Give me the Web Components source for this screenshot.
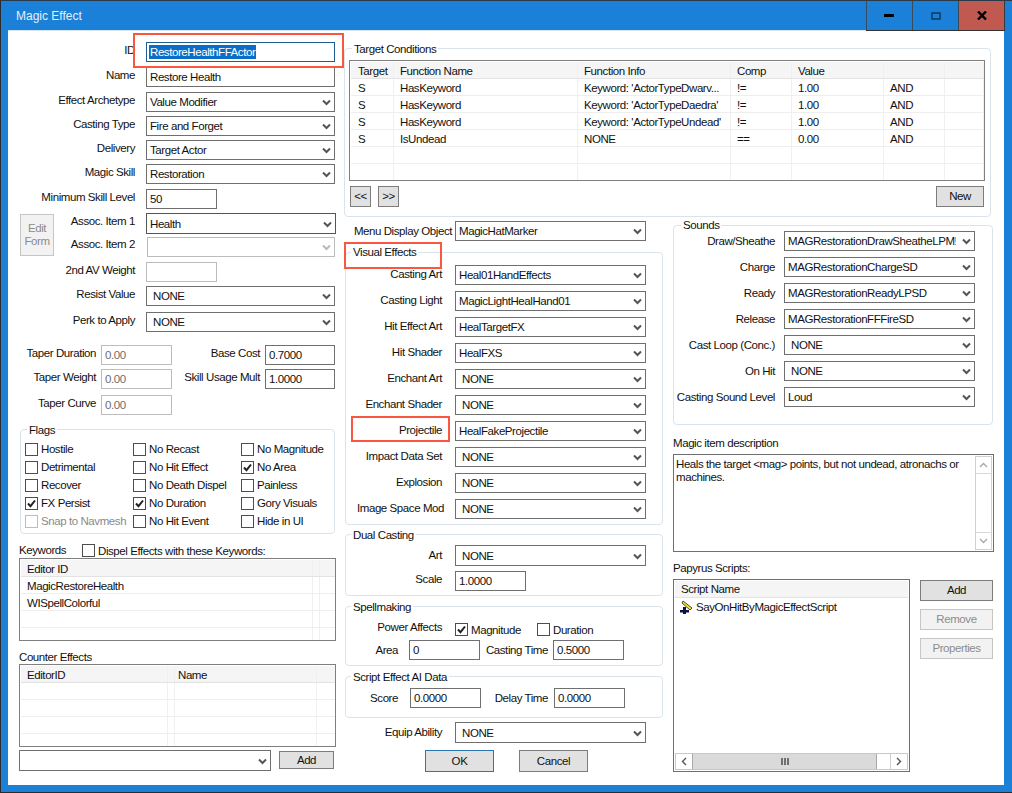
<!DOCTYPE html>
<html><head><meta charset="utf-8">
<style>
html,body{margin:0;padding:0;background:#fff}
body{width:1012px;height:793px;overflow:hidden;font:11.5px/14px "Liberation Sans",Arial,sans-serif;letter-spacing:-.42px;color:#111}
</style></head><body>
<script>
const def=(name,css,html,extra={})=>{
  customElements.define(name,class extends HTMLElement{
    connectedCallback(){
      if(this.shadowRoot)return;
      const s=this.attachShadow({mode:'open'});
      const h=typeof html==='function'?html(this):html;
      s.innerHTML=`<style>${css}</style>${h}`;
    }
  });
};
const chev=`<svg width="9" height="7" viewBox="0 0 9 7"><path d="M1 1.5 L4.5 5 L8 1.5" fill="none" stroke="currentColor" stroke-width="2"/></svg>`;
def('x-window',`
 :host{display:block;position:relative;width:1012px;height:793px;box-sizing:border-box;background:#1a80d8;border-top:1px solid #2b3a4a;border-left:1px solid #2b2b2b;border-bottom:1px solid #2b2b2b}
 .bar{display:flex;height:29px;position:relative;z-index:1}
 .t{color:#e4f1fc;font-size:12px;letter-spacing:0;margin:8px 0 0 15px;flex:1}
 .btns{display:flex;height:29px;margin-right:7px;border-bottom:1px solid #333;}
 .b{width:45px;border-left:1px solid #3a4a5a;display:flex;align-items:center;justify-content:center;box-sizing:content-box}
 .b.c{background:#c0594f;border-right:1px solid #3a3a3a;width:45px}
 .client{position:absolute;left:7px;top:29px;width:996px;height:755px;background:#fff;border-top:1px solid #d6e4f0;box-sizing:border-box;overflow:visible;display:flex}
`,`<div class="bar"><div class="t">Magic Effect</div><div class="btns">
 <div class="b"><svg width="10" height="3" style="margin-left:-2px"><rect width="10" height="3" fill="#000"/></svg></div>
 <div class="b"><svg width="10" height="8"><rect x="1" y="1" width="8" height="6" fill="none" stroke="#0e4a80" stroke-width="2"/></svg></div>
 <div class="b c"><svg width="10" height="9"><path d="M1 .5 L9 8.5 M9 .5 L1 8.5" stroke="#000" stroke-width="2.4"/></svg></div>
</div></div><div class="client"><slot></slot></div>`);

def('x-col',`:host{display:flex;flex-direction:column;box-sizing:border-box}`,`<slot></slot>`);
def('x-hbox',`:host{display:flex;box-sizing:border-box;align-items:flex-start}`,`<slot></slot>`);

def('x-group',`
 :host{display:block;box-sizing:border-box;position:relative;border:1px solid #dbe3ea;border-radius:4px}
 .l{position:absolute;left:var(--ll,7px);top:var(--lt,-7px);background:#fff;padding:0 2px;line-height:14px;white-space:nowrap}
`,t=>`<div class="l">${t.getAttribute('label')}</div><slot></slot>`);

def('x-field',`
 :host{display:grid;grid-template-columns:var(--lw,127px) auto;column-gap:var(--gap,11px);align-items:center;height:20px}
 .l{text-align:right;white-space:nowrap;padding-bottom:var(--ls,5px);margin-right:var(--lr,0)}
`,t=>`<div class="l">${t.getAttribute('label')}</div><slot></slot>`);

def('x-label',`:host{display:block;white-space:nowrap;line-height:14px}`,`<slot></slot>`);

const boxCss=`
 :host{display:flex;align-items:center;box-sizing:border-box;width:var(--w,189px);height:var(--h,20px);background:#fff;border:1px solid #6f6f6f;white-space:nowrap;overflow:hidden}
 :host([disabled]){border-color:#bcbcbc;color:#6d6d6d}
`;
def('x-input',boxCss+`
 :host{width:var(--w,71px);padding-left:3px}
 :host([selected]){border-color:#1d5d90;padding-left:2px}
 .s{background:#0a6ec9;color:#fff;padding:0 1px}
`,t=>{const v=t.getAttribute('value')||'';return t.hasAttribute('selected')?`<span class="s">${v}</span>`:`<span>${v}</span>`});
def('x-combo',boxCss+`
 :host{width:var(--w,191px);padding-left:3px;padding-right:3px;position:relative}
 :host([none]){padding-left:6px}
 .v{flex:1;overflow:hidden;margin-right:15px}
 .c{color:#555;display:flex;width:9px;height:7px;position:absolute;right:3px;top:50%;margin-top:-3px}
 :host([disabled]) .c{color:#b9b9b9}
`,t=>`<div class="v">${t.getAttribute('value')||''}</div><div class="c">${chev}</div>`);

def('x-check',`
 :host{display:flex;align-items:center;white-space:nowrap;height:18px}
 .b{width:13px;height:13px;box-sizing:border-box;border:1px solid #4d4d4d;margin-right:3px;background:#fff;display:flex;flex:none}
 :host([disabled]) .b{border-color:#bdbdbd}
 :host([disabled]){color:#8a8a8a}
`,t=>`<div class="b">${t.hasAttribute('checked')?`<svg width="11" height="11" viewBox="0 0 11 11"><path d="M2 5.5 L4.5 8.2 L9 2.5" fill="none" stroke="#222" stroke-width="2"/></svg>`:''}</div><slot></slot>`);

def('x-button',`
 :host{display:flex;align-items:center;justify-content:center;box-sizing:border-box;background:#e1e1e1;border:1px solid #7c7c7c;text-align:center;line-height:13px;white-space:nowrap;width:var(--w,69px);height:var(--h,21px)}
 :host([default]){border-color:#2b77b3}
 :host([disabled]){background:#f2f2f2;border-color:#c6c6c6;color:#8c8c8c}
`,`<slot></slot>`);

def('x-table',`
 :host{display:block;box-sizing:border-box;border:1px solid #7f7f7f;background:#fff;overflow:hidden;padding:1px 0 0 1px;width:var(--tw);height:var(--th)}
`,`<slot></slot>`);
def('x-tr',`
 :host{display:grid;grid-template-columns:var(--cols);height:17px;box-sizing:border-box;border-bottom:1px solid #eeeeee}
 :host([head]){background:#f5f5f5;border-bottom-color:#e3e3e3}
`,`<slot></slot>`);
def('x-td',`
 :host{display:block;box-sizing:border-box;padding:1px 0 0 var(--cp,6px);border-right:1px solid #f0f0f0;line-height:16px;white-space:nowrap;overflow:hidden;min-width:0}
`,`<slot></slot>`);

def('x-vscroll',`
 :host{display:flex;flex-direction:column;justify-content:space-between;width:17px;box-sizing:border-box;border:1px solid #d0d0d0;height:94px;background:#fff;color:#a8a8a8}
 .a{height:16px;display:flex;align-items:center;justify-content:center}
 .a.t{border-bottom:1px solid #d8d8d8}.a.d{border-top:1px solid #d8d8d8}
 svg{display:block}
`,`<div class="a t"><svg width="9" height="6"><path d="M1 5 L4.5 1.5 L8 5" fill="none" stroke="currentColor" stroke-width="1.4"/></svg></div>
   <div class="a d"><svg width="9" height="6"><path d="M1 1 L4.5 4.5 L8 1" fill="none" stroke="currentColor" stroke-width="1.4"/></svg></div>`);
def('x-hscroll',`
 :host{display:flex;height:17px;box-sizing:border-box;border:1px solid #c8c8c8;background:#fff;color:#555}
 .a{width:16px;display:flex;align-items:center;justify-content:center;flex:none}
 .th{flex:none;width:185px;background:#dadada;border-left:1px solid #a9a9a9;border-right:1px solid #a9a9a9;box-sizing:border-box;display:flex;align-items:center;justify-content:center}
 .sp{flex:1;border-right:1px solid #d0d0d0}
`,`<div class="a"><svg width="6" height="9"><path d="M5 1 L1.5 4.5 L5 8" fill="none" stroke="currentColor" stroke-width="1.4"/></svg></div>
 <div class="th"><svg width="8" height="7"><path d="M1 0V7M4 0V7M7 0V7" stroke="#444" stroke-width="1.4"/></svg></div>
 <div class="sp"></div>
 <div class="a"><svg width="6" height="9"><path d="M1 1 L4.5 4.5 L1 8" fill="none" stroke="currentColor" stroke-width="1.4"/></svg></div>`);
def('x-textarea',`
 :host{display:flex;box-sizing:border-box;border:1px solid #6f6f6f;background:#fff;height:98px;width:321px;padding:1px 1px 1px 2px}
 .t{flex:1;white-space:normal;line-height:13px;padding-top:2px;padding-right:10px}
`,`<div class="t"><slot></slot></div><x-vscroll></x-vscroll>`);
def('x-scriptlist',`
 :host{display:flex;flex-direction:column;box-sizing:border-box;border:1px solid #6f6f6f;background:#fff;width:237px;height:193px;padding:1px}
 .h{height:17px;background:#f5f5f5;border-bottom:1px solid #e3e3e3;box-sizing:border-box;padding:1px 0 0 6px;line-height:15px}
 .i{display:flex;align-items:center;height:17px;padding-left:4px;gap:3px}
 .sp{flex:1}
`,`<div class="h">Script Name</div>
 <div class="i"><svg width="14" height="14" viewBox="0 0 14 14"><path d="M1 10h3v-3h3v3h3v2.5h-3v1.5h-3v-1.5h-3z" fill="#10104a"/><path d="M4 1 L13 8 L11 10 L3 3z" fill="#f5e020" stroke="#222" stroke-width=".8"/></svg><span>SayOnHitByMagicEffectScript</span></div>
 <div class="sp"></div><x-hscroll></x-hscroll>`);
def('x-mark',`:host{position:absolute;box-sizing:border-box;border:2px solid #f9573f;pointer-events:none;display:block}`,``);
</script>

<x-window>
  <!-- left column -->
  <x-col style="width:336px;padding-top:11px">
    <x-field label="ID"><x-input value="RestoreHealthFFActor" selected style="--w:189px"></x-input></x-field>
    <x-field label="Name" style="margin-top:5px"><x-input value="Restore Health" style="--w:189px"></x-input></x-field>
    <x-field label="Effect Archetype" style="margin-top:5px"><x-combo value="Value Modifier" style="--w:189px"></x-combo></x-field>
    <x-field label="Casting Type" style="margin-top:4px"><x-combo value="Fire and Forget" style="--w:189px"></x-combo></x-field>
    <x-field label="Delivery" style="margin-top:4px"><x-combo value="Target Actor" style="--w:189px"></x-combo></x-field>
    <x-field label="Magic Skill" style="margin-top:4px"><x-combo value="Restoration" style="--w:189px"></x-combo></x-field>
    <x-field label="Minimum Skill Level" style="margin-top:5px"><x-input value="50"></x-input></x-field>
    <x-hbox style="margin-top:4px;height:44px;padding-left:12px">
      <x-button disabled style="--w:34px;--h:42px;margin-top:1px">Edit<br>Form</x-button>
      <x-col style="--lw:78px;--gap:11px;--ls:6px;margin-left:3px">
        <x-field label="Assoc. Item 1" style="height:21px"><x-combo value="Health" style="--w:190px;--h:21px;border-color:#555"></x-combo></x-field>
        <x-field label="Assoc. Item 2" style="margin-top:3px;--gap:12px"><x-combo disabled style="--w:188px"></x-combo></x-field>
      </x-col>
    </x-hbox>
    <x-field label="2nd AV Weight" style="margin-top:5px"><x-input disabled></x-input></x-field>
    <x-field label="Resist Value" style="margin-top:4px"><x-combo none value="NONE" style="--w:189px"></x-combo></x-field>
    <x-field label="Perk to Apply" style="margin-top:6px"><x-combo none value="NONE" style="--w:189px"></x-combo></x-field>
    <x-hbox style="margin-top:13px;--lw:88px;--gap:5px">
      <x-field label="Taper Duration"><x-input disabled value="0.00"></x-input></x-field>
      <x-field label="Base Cost"><x-input value="0.7000" style="--w:70px"></x-input></x-field>
    </x-hbox>
    <x-hbox style="margin-top:4px;--lw:88px;--gap:5px">
      <x-field label="Taper Weight"><x-input disabled value="0.00"></x-input></x-field>
      <x-field label="Skill Usage Mult"><x-input value="1.0000" style="--w:70px"></x-input></x-field>
    </x-hbox>
    <x-hbox style="margin-top:6px;--lw:88px;--gap:5px">
      <x-field label="Taper Curve"><x-input disabled value="0.00"></x-input></x-field>
    </x-hbox>
    <x-group label="Flags" style="margin:14px 0 0 12px;width:315px;height:105px;padding:10px 0 0 4px;--ll:6px">
      <div style="display:grid;grid-template-columns:108px 108px 90px;grid-auto-rows:18px">
        <x-check>Hostile</x-check><x-check>No Recast</x-check><x-check>No Magnitude</x-check>
        <x-check>Detrimental</x-check><x-check>No Hit Effect</x-check><x-check checked>No Area</x-check>
        <x-check>Recover</x-check><x-check>No Death Dispel</x-check><x-check>Painless</x-check>
        <x-check checked>FX Persist</x-check><x-check checked>No Duration</x-check><x-check>Gory Visuals</x-check>
        <x-check disabled>Snap to Navmesh</x-check><x-check>No Hit Event</x-check><x-check>Hide in UI</x-check>
      </div>
    </x-group>
    <x-hbox style="margin:8px 0 0 11px;height:17px;align-items:center">
      <x-label style="width:63px;position:relative;top:-1px">Keywords</x-label><x-check>Dispel Effects with these Keywords:</x-check>
    </x-hbox>
    <x-table style="margin-left:11px;--tw:317px;--th:83px;--cols:292px 4px 20px;margin-top:-1px">
      <x-tr head><x-td>Editor ID</x-td><x-td></x-td><x-td></x-td></x-tr>
      <x-tr><x-td>MagicRestoreHealth</x-td><x-td></x-td><x-td></x-td></x-tr>
      <x-tr><x-td>WISpellColorful</x-td><x-td></x-td><x-td></x-td></x-tr>
      <x-tr><x-td></x-td><x-td></x-td><x-td></x-td></x-tr>
      <x-tr><x-td></x-td><x-td></x-td><x-td></x-td></x-tr>
    </x-table>
    <x-label style="margin:9px 0 0 11px;height:14px">Counter Effects</x-label>
    <x-table style="margin-left:11px;--tw:317px;--th:83px;--cols:147px 4px 145px 20px">
      <x-tr head><x-td>EditorID</x-td><x-td></x-td><x-td>Name</x-td><x-td></x-td></x-tr>
      <x-tr><x-td></x-td><x-td></x-td><x-td></x-td><x-td></x-td></x-tr>
      <x-tr><x-td></x-td><x-td></x-td><x-td></x-td><x-td></x-td></x-tr>
      <x-tr><x-td></x-td><x-td></x-td><x-td></x-td><x-td></x-td></x-tr>
      <x-tr><x-td></x-td><x-td></x-td><x-td></x-td><x-td></x-td></x-tr>
    </x-table>
    <x-hbox style="margin:3px 0 0 11px">
      <x-combo style="--w:252px;--h:21px"></x-combo>
      <x-button style="--w:55px;--h:18px;margin:1px 0 0 8px">Add</x-button>
    </x-hbox>
  </x-col>

  <!-- centre + right -->
  <x-col style="width:660px">
    <x-group label="Target Conditions" style="margin-top:17px;width:647px;height:169px;padding:11px 0 0 4px">
      <x-table style="--tw:636px;--th:121px;--cols:43px 184px 153px 61px 92px 61px 39px">
        <x-tr head><x-td style="--cp:7px">Target</x-td><x-td>Function Name</x-td><x-td>Function Info</x-td><x-td>Comp</x-td><x-td>Value</x-td><x-td></x-td><x-td></x-td></x-tr>
        <x-tr><x-td style="--cp:7px">S</x-td><x-td>HasKeyword</x-td><x-td>Keyword: 'ActorTypeDwarv...</x-td><x-td>!=</x-td><x-td>1.00</x-td><x-td>AND</x-td><x-td></x-td></x-tr>
        <x-tr><x-td style="--cp:7px">S</x-td><x-td>HasKeyword</x-td><x-td>Keyword: 'ActorTypeDaedra'</x-td><x-td>!=</x-td><x-td>1.00</x-td><x-td>AND</x-td><x-td></x-td></x-tr>
        <x-tr><x-td style="--cp:7px">S</x-td><x-td>HasKeyword</x-td><x-td>Keyword: 'ActorTypeUndead'</x-td><x-td>!=</x-td><x-td>1.00</x-td><x-td>AND</x-td><x-td></x-td></x-tr>
        <x-tr><x-td style="--cp:7px">S</x-td><x-td>IsUndead</x-td><x-td>NONE</x-td><x-td>==</x-td><x-td>0.00</x-td><x-td>AND</x-td><x-td></x-td></x-tr>
        <x-tr><x-td></x-td><x-td></x-td><x-td></x-td><x-td></x-td><x-td></x-td><x-td></x-td><x-td></x-td></x-tr>
        <x-tr><x-td></x-td><x-td></x-td><x-td></x-td><x-td></x-td><x-td></x-td><x-td></x-td><x-td></x-td></x-tr>
      </x-table>
      <x-hbox style="margin:5px 0 0 1px;width:634px;--w:21px;--h:21px">
        <x-button>&lt;&lt;</x-button><x-button style="margin-left:7px">&gt;&gt;</x-button>
        <x-button style="--w:48px;margin-left:auto">New</x-button>
      </x-hbox>
    </x-group>
    <x-hbox>
      <x-col style="width:329px;--ll:5px">
        <x-field label="Menu Display Object" style="margin-top:4px;--lw:108px;--gap:3px;--ls:1px"><x-combo value="MagicHatMarker"></x-combo></x-field>
        <x-group label="Visual Effects" style="margin:11px 0 0 1px;width:318px;height:273px;padding-top:12px;--lw:96px;--gap:13px;--ls:2px;--lt:-8px">
          <x-col style="gap:6px">
            <x-field label="Casting Art"><x-combo value="Heal01HandEffects"></x-combo></x-field>
            <x-field label="Casting Light"><x-combo value="MagicLightHealHand01"></x-combo></x-field>
            <x-field label="Hit Effect Art"><x-combo value="HealTargetFX"></x-combo></x-field>
            <x-field label="Hit Shader"><x-combo value="HealFXS"></x-combo></x-field>
            <x-field label="Enchant Art"><x-combo none value="NONE"></x-combo></x-field>
            <x-field label="Enchant Shader"><x-combo none value="NONE"></x-combo></x-field>
            <x-field label="Projectile"><x-combo value="HealFakeProjectile"></x-combo></x-field>
            <x-field label="Impact Data Set"><x-combo none value="NONE"></x-combo></x-field>
            <x-field label="Explosion"><x-combo none value="NONE"></x-combo></x-field>
            <x-field label="Image Space Mod" style="--lr:-2px"><x-combo none value="NONE"></x-combo></x-field>
          </x-col>
        </x-group>
        <x-group label="Dual Casting" style="margin:9px 0 0 1px;width:318px;height:62px;padding-top:10px;--lw:96px;--gap:13px">
          <x-field label="Art" style="height:21px;--ls:1px"><x-combo none value="NONE" style="--h:21px"></x-combo></x-field>
          <x-field label="Scale" style="margin-top:5px;--ls:5px"><x-input value="1.0000"></x-input></x-field>
        </x-group>
        <x-group label="Spellmaking" style="margin:10px 0 0 1px;width:318px;height:60px;padding-top:13px">
          <x-hbox style="height:16px;--lw:96px;--gap:13px">
            <x-field label="Power Affects" style="height:16px;--ls:5px"><x-hbox><x-check checked style="width:82px;height:16px">Magnitude</x-check><x-check style="height:16px">Duration</x-check></x-hbox></x-field>
          </x-hbox>
          <x-hbox style="margin-top:4px;--ls:1px">
            <x-field label="Area" style="--lw:52px;--gap:11px"><x-input value="0"></x-input></x-field>
            <x-field label="Casting Time" style="--lw:68px;--gap:5px"><x-input value="0.5000"></x-input></x-field>
          </x-hbox>
        </x-group>
        <x-group label="Script Effect AI Data" style="margin:10px 0 0 1px;width:318px;height:42px;padding-top:11px;--ls:0">
          <x-hbox>
            <x-field label="Score" style="--lw:52px;--gap:12px"><x-input value="0.0000"></x-input></x-field>
            <x-field label="Delay Time" style="--lw:67px;--gap:6px"><x-input value="0.0000"></x-input></x-field>
          </x-hbox>
        </x-group>
        <x-field label="Equip Ability" style="margin-top:4px;height:21px;--lw:98px;--gap:13px;--ls:1px"><x-combo none value="NONE" style="--h:21px"></x-combo></x-field>
        <x-hbox style="margin:7px 0 0 81px;gap:25px;--w:69px;--h:22px">
          <x-button default>OK</x-button><x-button>Cancel</x-button>
        </x-hbox>
      </x-col>
      <x-col style="width:331px">
        <x-group label="Sounds" style="margin-top:8px;width:320px;height:200px;padding-top:5px;--lw:101px;--gap:9px;--ls:1px;--lt:-8px">
          <x-col style="gap:6px">
            <x-field label="Draw/Sheathe"><x-combo value="MAGRestorationDrawSheatheLPM!"></x-combo></x-field>
            <x-field label="Charge"><x-combo value="MAGRestorationChargeSD"></x-combo></x-field>
            <x-field label="Ready"><x-combo value="MAGRestorationReadyLPSD"></x-combo></x-field>
            <x-field label="Release"><x-combo value="MAGRestorationFFFireSD"></x-combo></x-field>
            <x-field label="Cast Loop (Conc.)"><x-combo none value="NONE"></x-combo></x-field>
            <x-field label="On Hit"><x-combo none value="NONE"></x-combo></x-field>
            <x-field label="Casting Sound Level"><x-combo value="Loud"></x-combo></x-field>
          </x-col>
        </x-group>
        <x-label style="margin-top:11px;height:15px">Magic item description</x-label>
        <x-textarea style="margin-top:3px">Heals the target &lt;mag&gt; points, but not undead, atronachs or machines.</x-textarea>
        <x-label style="margin-top:9px;height:14px">Papyrus Scripts:</x-label>
        <x-hbox style="margin-top:4px">
          <x-scriptlist></x-scriptlist>
          <x-col style="margin:1px 0 0 10px;gap:8px;--w:73px;--h:21px">
            <x-button>Add</x-button><x-button disabled>Remove</x-button><x-button disabled>Properties</x-button>
          </x-col>
        </x-hbox>
      </x-col>
    </x-hbox>
  </x-col>

  <!-- red annotations laid over the form -->
  <x-mark style="left:125px;top:2px;width:211px;height:35px"></x-mark>
  <x-mark style="left:336px;top:211px;width:98px;height:27px"></x-mark>
  <x-mark style="left:343px;top:385px;width:99px;height:26px"></x-mark>
</x-window>
</body></html>
